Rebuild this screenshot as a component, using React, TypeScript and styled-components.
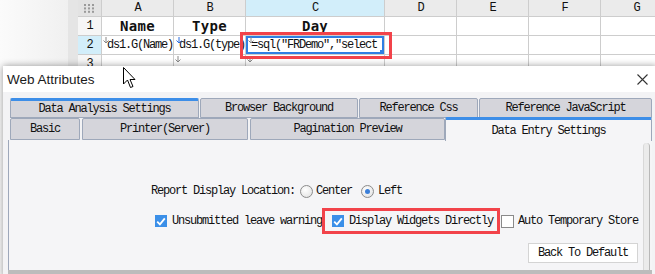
import styled, { createGlobalStyle } from 'styled-components';

const GlobalStyle = createGlobalStyle`
  html, body {
    margin: 0;
    padding: 0;
  }
  body {
    width: 655px;
    height: 274px;
    overflow: hidden;
    background: #f4f4f4;
  }
`;

const MONO = `"Liberation Mono", "DejaVu Sans Mono", monospace`;

const Page = styled.div`
  position: relative;
  width: 655px;
  height: 274px;
  overflow: hidden;
  display: flex;
  font-family: ${MONO};
  font-size: 12px;
  letter-spacing: -1.2px;
  color: #111;
`;

const Gutter = styled.div`
  width: 68px;
  flex-shrink: 0;
  background: linear-gradient(to right, #fbfbfb, #f0f0f0);
`;

const GutterStrip = styled.div`
  width: 10px;
  flex-shrink: 0;
  background: #e5e5e5;
`;

const Sheet = styled.div`
  display: grid;
  grid-template-columns: 24px 72px 72px 139px 72px 72px 72px 72px;
  grid-template-rows: 17px 19px 19px 19px;
  align-content: start;
  background: #fff;
  height: 100%;
`;

type CellKind = 'corner' | 'col' | 'row' | 'cell';

const Cell = styled.div<{ $kind: CellKind; $active?: boolean; $bold?: boolean; $selected?: boolean }>`
  position: relative;
  box-sizing: border-box;
  border-right: 1px solid #cdcdcd;
  border-bottom: 1px solid #cdcdcd;
  display: flex;
  align-items: center;
  justify-content: ${(p) => (p.$kind === 'cell' && !p.$bold ? 'flex-start' : 'center')};
  padding-left: ${(p) => (p.$kind === 'cell' && !p.$bold ? '5px' : '0')};
  white-space: nowrap;
  overflow: hidden;
  background: ${(p) =>
    p.$active
      ? '#d2eefa'
      : p.$kind === 'corner'
      ? '#e3e3e3'
      : p.$kind === 'col'
      ? '#ebebeb'
      : p.$kind === 'row'
      ? '#f6f6f6'
      : '#fff'};
  font-family: ${(p) => (p.$bold ? `"DejaVu Sans Mono", monospace` : MONO)};
  font-weight: ${(p) => (p.$bold ? 700 : 400)};
  font-size: ${(p) => (p.$bold ? '14px' : '12px')};
  letter-spacing: ${(p) => (p.$bold ? '0.3px' : '-1.2px')};
  box-shadow: ${(p) => (p.$selected ? 'inset 0 0 0 2px #2f7fe3' : 'none')};
`;

const CellMark = styled.svg<{ $left?: number }>`
  position: absolute;
  left: ${(p) => p.$left ?? 1}px;
  top: 1px;
`;

const Handle = styled.span`
  position: absolute;
  right: 0;
  bottom: 0;
  width: 4px;
  height: 4px;
  background: #2f7fe3;
`;

const SheetHighlight = styled.div`
  position: absolute;
  left: 240px;
  top: 32px;
  width: 152px;
  height: 27px;
  box-sizing: border-box;
  border: 3px solid #f2434a;
`;

const Dialog = styled.div`
  position: absolute;
  left: 3px;
  top: 66px;
  width: 654px;
  height: 212px;
  background: #f3f3f5;
  box-shadow: 0 0 7px rgba(0, 0, 0, 0.4);
  display: flex;
  flex-direction: column;
`;

const TitleBar = styled.div`
  height: 26px;
  flex-shrink: 0;
  background: #fff;
  display: flex;
  align-items: center;
  justify-content: space-between;
  padding: 0 9px 0 4px;
  font-family: "Liberation Sans", Arial, sans-serif;
  font-size: 13.5px;
  letter-spacing: 0;
  color: #1a1a1a;
`;

const Body = styled.div`
  display: flex;
  flex-direction: column;
  padding: 6px 2px 0 5px;
  flex: 1;
`;

const TabRow = styled.div<{ $h: number }>`
  display: flex;
  height: ${(p) => p.$h}px;
  padding-left: 2px;
  align-items: flex-end;
`;

const Tab = styled.div<{ $w: number; $gap?: number; $accent?: boolean; $selected?: boolean }>`
  box-sizing: border-box;
  width: ${(p) => p.$w}px;
  height: ${(p) => (p.$selected ? 'calc(100% + 2px)' : '100%')};
  margin-right: ${(p) => p.$gap ?? 0}px;
  align-self: flex-end;
  display: flex;
  align-items: ${(p) => (p.$selected ? 'flex-start' : 'center')};
  padding-top: ${(p) => (p.$selected ? '4px' : '0')};
  justify-content: center;
  background: ${(p) => (p.$selected ? '#f5f5f7' : '#d5d5db')};
  border: 1px solid #9ea8ba;
  border-bottom: ${(p) => (p.$selected ? 'none' : '1px solid #9ea8ba')};
  border-top: ${(p) => (p.$accent || p.$selected ? '3px solid #3d8ee8' : '1px solid #9ea8ba')};
  border-radius: 2px 2px 0 0;
  white-space: nowrap;
  position: relative;
  z-index: ${(p) => (p.$selected ? 2 : 1)};
  margin-bottom: ${(p) => (p.$selected ? '-1px' : '0')};
`;

const Panel = styled.div`
  height: 130px;
  box-sizing: border-box;
  display: flex;
  background: #f5f5f7;
  border-left: 1px solid #9ea8ba;
  margin-right: 3px;
`;

const PanelContent = styled.div`
  flex: 1;
  display: flex;
  flex-direction: column;
  padding: 44px 5px 0 0;
`;

const OptionRow = styled.div<{ $indent: number; $gap?: number }>`
  display: flex;
  align-items: center;
  padding-left: ${(p) => p.$indent}px;
  margin-bottom: ${(p) => p.$gap ?? 0}px;
  white-space: nowrap;
`;

const Radio = styled.span<{ $on?: boolean; $ml?: number; $mr?: number }>`
  box-sizing: border-box;
  width: 13px;
  height: 13px;
  border-radius: 50%;
  border: 1px solid #8c8c8c;
  background: radial-gradient(circle at 40% 35%, #ffffff, #dedede);
  margin-left: ${(p) => p.$ml ?? 0}px;
  margin-right: ${(p) => p.$mr ?? 0}px;
  display: flex;
  align-items: center;
  justify-content: center;
  &::after {
    content: '';
    display: ${(p) => (p.$on ? 'block' : 'none')};
    width: 5px;
    height: 5px;
    border-radius: 50%;
    background: #3b7fd9;
  }
`;

const CheckBox = styled.span<{ $on?: boolean; $mr?: number }>`
  box-sizing: border-box;
  width: ${(p) => (p.$on ? 12 : 13)}px;
  height: ${(p) => (p.$on ? 12 : 13)}px;
  background: ${(p) => (p.$on ? '#3b8fe8' : '#fff')};
  border: ${(p) => (p.$on ? 'none' : '1px solid #8a8a8a')};
  margin-right: ${(p) => p.$mr ?? 5}px;
  display: flex;
  align-items: center;
  justify-content: center;
`;

const Marked = styled.span`
  box-sizing: border-box;
  display: flex;
  align-items: center;
  height: 26px;
  padding: 0 4px 0 7px;
  border: 3px solid #f2434a;
  margin-right: 1px;
`;

const ButtonRow = styled.div`
  display: flex;
  justify-content: flex-end;
  margin-top: 9px;
`;

const DefaultButton = styled.div`
  box-sizing: border-box;
  width: 110px;
  height: 20px;
  background: #fff;
  border: 1px solid #d4d4d4;
  display: flex;
  align-items: center;
  justify-content: center;
`;

const ScrollTrack = styled.div`
  width: 10px;
  margin: 3px 2px 0 0;
  background: #ebebeb;
  border-left: 1px solid #d8d8d8;
  border-right: 1px solid #b8b8b8;
  border-radius: 4px 4px 0 0;
`;

const Footer = styled.div`
  flex: 1;
  background: #bcbcbc;
  margin-right: 3px;
`;

const Cursor = styled.svg`
  position: absolute;
  left: 123px;
  top: 67px;
`;

const Check = () => (
  <svg width="10" height="9" viewBox="0 0 10 9">
    <path d="M1.2 4.6 L3.9 7.3 L8.8 1.4" fill="none" stroke="#fff" strokeWidth="1.8" />
  </svg>
);

const DownMark = ({ color = '#888', left }: { color?: string; left?: number }) => (
  <CellMark $left={left} width="6" height="7" viewBox="0 0 6 7">
    <path d="M3 0 V6 M0.5 3.5 L3 6 L5.5 3.5" fill="none" stroke={color} strokeWidth="1" />
  </CellMark>
);

const CornerDots = () => (
  <svg width="11" height="9" viewBox="0 0 11 9">
    {[0, 1, 2].map((r) =>
      [0, 1, 2].map((c) => <rect key={`${r}-${c}`} x={c * 4} y={r * 3.4} width="2" height="2" fill="#9a9a9a" />)
    )}
  </svg>
);

const columns = ['A', 'B', 'C', 'D', 'E', 'F', 'G'];

const backTabs = [
  { label: 'Data Analysis Settings', w: 189, gap: 1, accent: true },
  { label: 'Browser Background', w: 158, gap: 1 },
  { label: 'Reference Css', w: 119, gap: 1 },
  { label: 'Reference JavaScript', w: 173 },
];

const frontTabs = [
  { label: 'Basic', w: 70, gap: 2 },
  { label: 'Printer(Server)', w: 166, gap: 2 },
  { label: 'Pagination Preview', w: 195 },
  { label: 'Data Entry Settings', w: 207, selected: true },
];

export default function App() {
  return (
    <>
      <GlobalStyle />
      <Page>
        <Gutter />
        <GutterStrip />
        <Sheet>
          <Cell $kind="corner">
            <CornerDots />
          </Cell>
          {columns.map((c) => (
            <Cell key={c} $kind="col" $active={c === 'C'}>
              {c}
            </Cell>
          ))}

          <Cell $kind="row">1</Cell>
          <Cell $kind="cell" $bold>Name</Cell>
          <Cell $kind="cell" $bold>Type</Cell>
          <Cell $kind="cell" $bold>Day</Cell>
          {columns.slice(3).map((c) => (
            <Cell key={`1${c}`} $kind="cell" />
          ))}

          <Cell $kind="row" $active>2</Cell>
          <Cell $kind="cell">
            <DownMark />
            ds1.G(Name)
          </Cell>
          <Cell $kind="cell">
            <DownMark color="#2a6fe0" left={2} />
            ds1.G(type)
          </Cell>
          <Cell $kind="cell" $selected>
            <DownMark left={2} />
            =sql("FRDemo","select
            <Handle />
          </Cell>
          {columns.slice(3).map((c) => (
            <Cell key={`2${c}`} $kind="cell" />
          ))}

          <Cell $kind="row">3</Cell>
          <Cell $kind="cell" />
          <Cell $kind="cell">
            <DownMark />
          </Cell>
          <Cell $kind="cell">
            <DownMark />
          </Cell>
          {columns.slice(3).map((c) => (
            <Cell key={`3${c}`} $kind="cell" />
          ))}
        </Sheet>

        <SheetHighlight />

        <Dialog>
          <TitleBar>
            <span>Web Attributes</span>
            <svg width="11" height="11" viewBox="0 0 11 11">
              <path d="M0.5 0.5 L10.5 10.5 M10.5 0.5 L0.5 10.5" stroke="#333" strokeWidth="1.1" />
            </svg>
          </TitleBar>
          <Body>
            <TabRow $h={20}>
              {backTabs.map((t) => (
                <Tab key={t.label} $w={t.w} $gap={t.gap} $accent={t.accent}>
                  {t.label}
                </Tab>
              ))}
            </TabRow>
            <TabRow $h={22}>
              {frontTabs.map((t) => (
                <Tab key={t.label} $w={t.w} $gap={t.gap} $selected={t.selected}>
                  {t.label}
                </Tab>
              ))}
            </TabRow>
            <Panel>
              <PanelContent>
                <OptionRow $indent={142} $gap={10}>
                  Report Display Location:
                  <Radio $ml={5} $mr={3} />
                  Center
                  <Radio $on $ml={9} $mr={4} />
                  Left
                </OptionRow>
                <OptionRow $indent={146}>
                  <CheckBox $on>
                    <Check />
                  </CheckBox>
                  Unsubmitted leave warning
                  <Marked>
                    <CheckBox $on>
                      <Check />
                    </CheckBox>
                    Display Widgets Directly
                  </Marked>
                  <CheckBox $mr={4} />
                  Auto Temporary Store
                </OptionRow>
                <ButtonRow>
                  <DefaultButton>Back To Default</DefaultButton>
                </ButtonRow>
              </PanelContent>
              <ScrollTrack />
            </Panel>
            <Footer />
          </Body>
        </Dialog>

        <Cursor width="13" height="22" viewBox="0 0 13 22">
          <path
            d="M0.5 0.5 L0.5 17 L4.5 13 L7.5 20.5 L10 19.5 L7 12.5 L12 12.5 Z"
            fill="#fff"
            stroke="#000"
            strokeWidth="1"
            strokeLinejoin="round"
          />
        </Cursor>
      </Page>
    </>
  );
}
